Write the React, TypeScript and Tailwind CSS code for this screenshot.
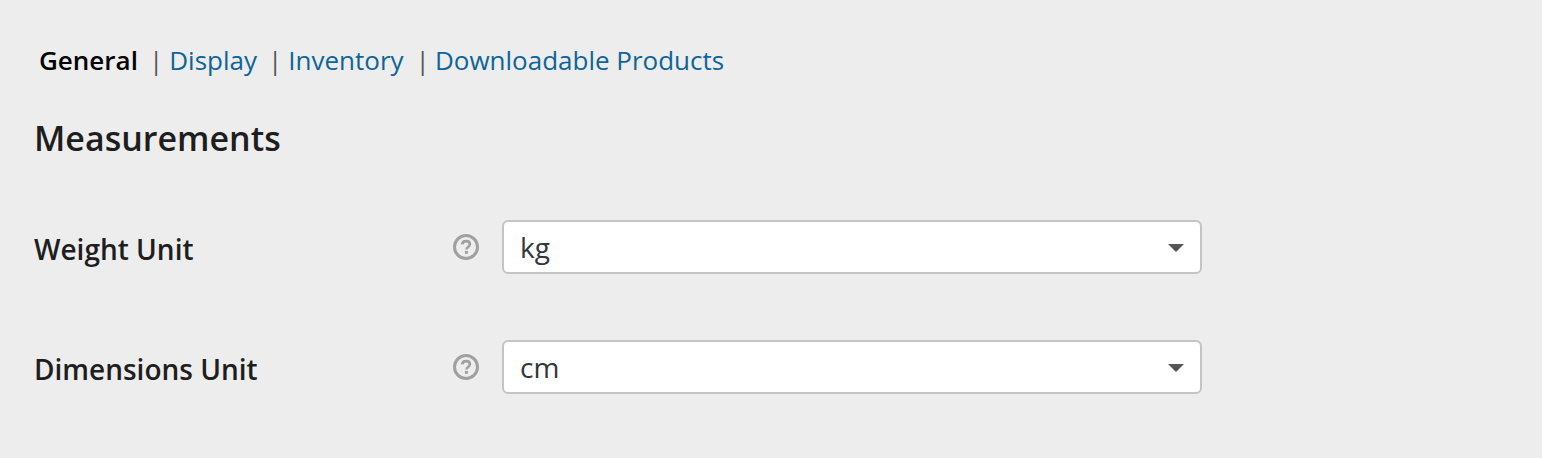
const font = "font-['Open_Sans',sans-serif]";

function HelpIcon() {
  return (
    <svg width="26" height="26" viewBox="0 0 26 26" fill="none" className="shrink-0">
      <circle cx="13" cy="13" r="11.500" stroke="#a0a0a0" strokeWidth="3" />
      <path d="M9.200 10.400c.2-2.200 1.800-3.300 3.900-3.300 2.200 0 3.800 1.200 3.800 3.100 0 2.700-3.400 2.700-3.400 5.200" stroke="#a0a0a0" strokeWidth="2.600" />
      <rect x="11.900" y="16.900" width="3" height="2.900" fill="#a0a0a0" />
    </svg>
  );
}

function SettingRow({ label, value }: { label: string; value: string }) {
  return (
    <div className="flex items-center h-[53px]">
      <div className="w-[419px] text-[28px] leading-none font-semibold text-[#1e1e1e] pt-[5px]">{label}</div>
      <div className="w-[49px] mt-[1px]">
        <HelpIcon />
      </div>
      <div className="w-[700px] h-[54px] bg-white border-2 border-[#c4c4c4] rounded-[6px] flex items-center justify-between pl-[16px] pr-[16px]">
        <span className="text-[28px] leading-none text-[#32373c]">{value}</span>
        <span className="mt-[2px] w-0 h-0 border-x-[8px] border-x-transparent border-t-[8px] border-t-[#555555]" />
      </div>
    </div>
  );
}

export default function App() {
  return (
    <div className={`${font} w-[1542px] h-[458px] bg-[#ededed] overflow-hidden pl-[34px] pt-[43px]`}>
      <div className="flex items-center h-[34px] text-[26px] leading-none text-[#555555] ml-[5px]">
        <span className="font-semibold text-black">General</span>
        <span className="ml-[11px] mr-[6px]">|</span>
        <a className="text-[#0f6499]">Display</a>
        <span className="ml-[11px] mr-[6px]">|</span>
        <a className="text-[#0f6499]">Inventory</a>
        <span className="ml-[12px] mr-[5px]">|</span>
        <a className="text-[#0f6499]">Downloadable Products</a>
      </div>
      <h2 className="mt-[41px] text-[34px] leading-[40px] font-semibold text-[#1e1e1e]">Measurements</h2>
      <div className="mt-[62px] flex flex-col gap-[67px]">
        <SettingRow label="Weight Unit" value="kg" />
        <SettingRow label="Dimensions Unit" value="cm" />
      </div>
    </div>
  );
}
